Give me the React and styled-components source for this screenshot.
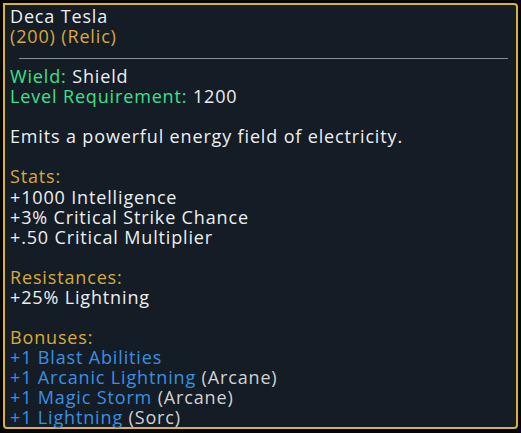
import React from 'react';
import styled, { createGlobalStyle } from 'styled-components';

const Global = createGlobalStyle`
  html, body { margin: 0; padding: 0; background: #000; }
  body { width: 521px; height: 433px; overflow: hidden; }
`;

const Frame = styled.div`
  box-sizing: border-box;
  width: 521px;
  height: 433px;
  background: #050506;
  padding: 3px 3px 4px 3px;
`;

const Tooltip = styled.div`
  box-sizing: border-box;
  height: 100%;
  border: 2px solid #d9b23c;
  border-radius: 0 4px 4px 4px;
  background: #141d26;
  padding: 1px 8px 0 5px;
  font-family: "Open Sans", sans-serif;
  font-size: 18px;
  letter-spacing: 0.85px;
  line-height: 20.1px;
  color: #eeeeee;
`;

const Line = styled.div`
  min-height: 20px;
  white-space: nowrap;
  color: ${p => p.$color || '#eeeeee'};
`;

const Gap = styled.div`
  height: 20px;
`;

const Rule = styled.hr`
  border: 0;
  height: 1px;
  background: #8a8d93;
  margin: 12px 0 7px 9px;
`;

const Label = styled.span`
  color: ${p => p.$color};
`;

const Note = styled.span`
  color: #d2d2d2;
`;

const GOLD = '#d9a93a';
const GREEN = '#3fe08a';
const BLUE = '#3a8fe3';

export default function App() {
  return (
    <>
      <Global />
      <Frame>
        <Tooltip>
          <Line>Deca Tesla</Line>
          <Line $color={GOLD}>(200) (Relic)</Line>
          <Rule />
          <Line><Label $color={GREEN}>Wield:</Label> Shield</Line>
          <Line><Label $color={GREEN}>Level Requirement:</Label> 1200</Line>
          <Gap />
          <Line>Emits a powerful energy field of electricity.</Line>
          <Gap />
          <Line $color={GOLD}>Stats:</Line>
          <Line>+1000 Intelligence</Line>
          <Line>+3% Critical Strike Chance</Line>
          <Line>+.50 Critical Multiplier</Line>
          <Gap />
          <Line $color={GOLD}>Resistances:</Line>
          <Line>+25% Lightning</Line>
          <Gap />
          <Line $color={GOLD}>Bonuses:</Line>
          <Line $color={BLUE}>+1 Blast Abilities</Line>
          <Line $color={BLUE}>+1 Arcanic Lightning <Note>(Arcane)</Note></Line>
          <Line $color={BLUE}>+1 Magic Storm <Note>(Arcane)</Note></Line>
          <Line $color={BLUE}>+1 Lightning <Note>(Sorc)</Note></Line>
        </Tooltip>
      </Frame>
    </>
  );
}
